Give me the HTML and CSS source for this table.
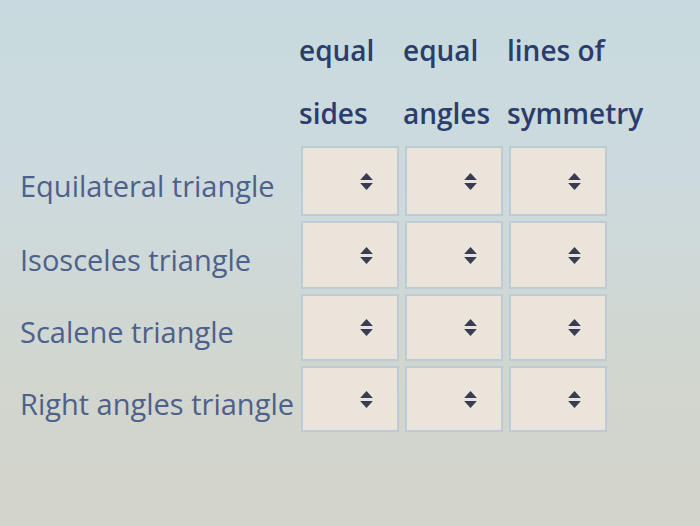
FILE: index.html
```html
<!DOCTYPE html>
<html>
<head>
<meta charset="utf-8">
<link rel="stylesheet" href="styles.css">
</head>
<body>
<div class="page">
  <div class="grid">
    <div class="corner"></div>
    <div class="head">equal<br>sides</div>
    <div class="head">equal<br>angles</div>
    <div class="head">lines of<br>symmetry</div>

    <div class="label">Equilateral triangle</div>
    <div class="cell"><svg class="spin" viewBox="0 0 12 16"><path d="M6 0 L12 6.5 L0 6.5 Z M0 9.5 L12 9.5 L6 16 Z"/></svg></div>
    <div class="cell"><svg class="spin" viewBox="0 0 12 16"><path d="M6 0 L12 6.5 L0 6.5 Z M0 9.5 L12 9.5 L6 16 Z"/></svg></div>
    <div class="cell"><svg class="spin" viewBox="0 0 12 16"><path d="M6 0 L12 6.5 L0 6.5 Z M0 9.5 L12 9.5 L6 16 Z"/></svg></div>

    <div class="label">Isosceles triangle</div>
    <div class="cell"><svg class="spin" viewBox="0 0 12 16"><path d="M6 0 L12 6.5 L0 6.5 Z M0 9.5 L12 9.5 L6 16 Z"/></svg></div>
    <div class="cell"><svg class="spin" viewBox="0 0 12 16"><path d="M6 0 L12 6.5 L0 6.5 Z M0 9.5 L12 9.5 L6 16 Z"/></svg></div>
    <div class="cell"><svg class="spin" viewBox="0 0 12 16"><path d="M6 0 L12 6.5 L0 6.5 Z M0 9.5 L12 9.5 L6 16 Z"/></svg></div>

    <div class="label">Scalene triangle</div>
    <div class="cell"><svg class="spin" viewBox="0 0 12 16"><path d="M6 0 L12 6.5 L0 6.5 Z M0 9.5 L12 9.5 L6 16 Z"/></svg></div>
    <div class="cell"><svg class="spin" viewBox="0 0 12 16"><path d="M6 0 L12 6.5 L0 6.5 Z M0 9.5 L12 9.5 L6 16 Z"/></svg></div>
    <div class="cell"><svg class="spin" viewBox="0 0 12 16"><path d="M6 0 L12 6.5 L0 6.5 Z M0 9.5 L12 9.5 L6 16 Z"/></svg></div>

    <div class="label">Right angles triangle</div>
    <div class="cell"><svg class="spin" viewBox="0 0 12 16"><path d="M6 0 L12 6.5 L0 6.5 Z M0 9.5 L12 9.5 L6 16 Z"/></svg></div>
    <div class="cell"><svg class="spin" viewBox="0 0 12 16"><path d="M6 0 L12 6.5 L0 6.5 Z M0 9.5 L12 9.5 L6 16 Z"/></svg></div>
    <div class="cell"><svg class="spin" viewBox="0 0 12 16"><path d="M6 0 L12 6.5 L0 6.5 Z M0 9.5 L12 9.5 L6 16 Z"/></svg></div>
  </div>
</div>
</body>
</html>
```

FILE: styles.css
```css
html, body {
  margin: 0;
  padding: 0;
}
body {
  width: 700px;
  height: 526px;
  overflow: hidden;
  background: linear-gradient(180deg, #c8dadf 0%, #cddadd 35%, #d1d6cf 70%, #d3d4ca 100%);
  font-family: "Open Sans", "Noto Sans", sans-serif;
}
.page {
  padding: 19px 0 0 17px;
}
.grid {
  display: grid;
  grid-template-columns: 278px 98px 98px 98px;
  grid-template-rows: 122px 70px 68px 67px 66px;
  column-gap: 6px;
  row-gap: 5px;
}
.head {
  font-weight: 600;
  font-size: 28px;
  line-height: 63px;
  color: #2b3d6c;
  white-space: nowrap;
  margin-left: -2px;
}
.label {
  font-size: 29px;
  color: #4d618a;
  display: flex;
  align-items: center;
  padding: 8px 0 0 3px;
  white-space: nowrap;
}
.cell {
  background: #ebe4db;
  border: 2px solid #bccbd6;
  box-sizing: border-box;
  display: flex;
  align-items: center;
  padding-left: 57px;
}
.spin {
  width: 13px;
  height: 17px;
  fill: #373c52;
}
```
